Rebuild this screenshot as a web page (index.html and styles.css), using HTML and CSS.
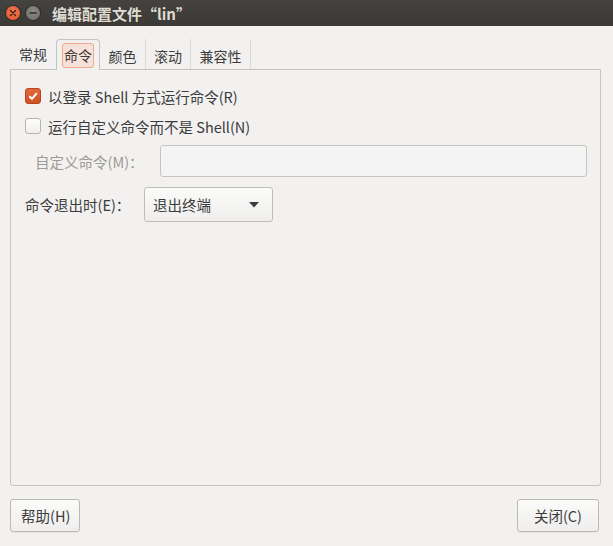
FILE: index.html
```html
<!DOCTYPE html>
<html lang="zh-CN">
<head>
  <meta charset="UTF-8" />
  <title>编辑配置文件“lin”</title>
  <link rel="stylesheet" href="styles.css">
</head>
<body>
  <div class="window">
    <div class="titlebar">
      <span class="wbtn close">
        <svg width="8" height="8" viewBox="0 0 8 8"><path d="M1.5 1.5 L6.5 6.5 M6.5 1.5 L1.5 6.5" stroke="#3b1a10" stroke-width="1.3" stroke-linecap="round"/></svg>
      </span>
      <span class="wbtn minimize">
        <svg width="8" height="8" viewBox="0 0 8 8"><path d="M1 4 H7" stroke="#2e2d2a" stroke-width="1.3" stroke-linecap="round"/></svg>
      </span>
      <span class="title">编辑配置文件“lin”</span>
    </div>

    <div class="dialog">
      <div class="tabs">
        <div class="tab">常规</div>
        <div class="tab active"><span class="focus">命令</span></div>
        <div class="tab sep">颜色</div>
        <div class="tab sep">滚动</div>
        <div class="tab sep last">兼容性</div>
      </div>

      <div class="panel">
        <label class="check-row">
          <span class="checkbox checked">
            <svg width="12" height="12" viewBox="0 0 12 12"><path d="M2.3 6.2 L5 8.8 L9.8 3.2" fill="none" stroke="#fff" stroke-width="2"/></svg>
          </span>
          <span>以登录 Shell 方式运行命令(R)</span>
        </label>
        <label class="check-row">
          <span class="checkbox"></span>
          <span>运行自定义命令而不是 Shell(N)</span>
        </label>

        <div class="field-row">
          <span class="field-label disabled">自定义命令(M)：</span>
          <div class="entry"></div>
        </div>

        <div class="field-row exit-row">
          <span class="field-label">命令退出时(E)：</span>
          <div class="combo">
            <span>退出终端</span>
            <svg width="10" height="6" viewBox="0 0 10 6"><path d="M0 0 H10 L5 5.5 Z" fill="#3c3c3c"/></svg>
          </div>
        </div>
      </div>

      <div class="actions">
        <button class="btn help">帮助(H)</button>
        <button class="btn">关闭(C)</button>
      </div>
    </div>
  </div>
</body>
</html>
```

FILE: styles.css
```css
body {
  margin: 0;
  font-family: "Noto Sans CJK SC", "Noto Sans", sans-serif;
  font-size: 14.5px;
  color: #3c3c3c;
  background: #f2f1f0;
}

.window {
  width: 613px;
  height: 546px;
  display: flex;
  flex-direction: column;
}

.titlebar {
  height: 26px;
  background: linear-gradient(#44433f, #3a3935);
  display: flex;
  align-items: center;
  padding-left: 6px;
}

.wbtn {
  width: 14px;
  height: 14px;
  border-radius: 50%;
  display: flex;
  align-items: center;
  justify-content: center;
  margin-right: 6px;
}

.wbtn.close {
  background: radial-gradient(circle at 50% 40%, #f27a52, #e0522a);
  box-shadow: 0 0 0 1px #2f2e2b;
}

.wbtn.minimize {
  background: radial-gradient(circle at 50% 40%, #8e8c86, #6c6a65);
  box-shadow: 0 0 0 1px #2f2e2b;
}

.title {
  margin-left: 6px;
  color: #dfdbd2;
  font-weight: bold;
  font-size: 15px;
}

.dialog {
  flex: 1;
  display: flex;
  flex-direction: column;
  padding: 13px 12px 14px 10px;
}

.tabs {
  display: flex;
  height: 30px;
  font-size: 14px;
}

.tab {
  padding: 0 8px;
  display: flex;
  align-items: center;
  justify-content: center;
  height: 30px;
  box-sizing: border-box;
  position: relative;
}

.tab:first-child { width: 46px; }

.tab.active {
  width: 44px;
  border: 1px solid #c7c4bf;
  border-bottom: none;
  border-radius: 4px 4px 0 0;
  background: #f2f1f0;
  padding: 0 5px;
  margin-bottom: -1px;
  height: 31px;
  z-index: 1;
}

.focus {
  display: block;
  border: 1px solid #f0a98c;
  background: #f8e1d8;
  border-radius: 3px;
  padding: 0 1px;
  line-height: 23px;
}

.tab.sep { width: 45px; }

.tab.sep:nth-child(4) { border-left: 1px solid #dedbd7; }

.tab.last {
  width: 61px;
  border-left: 1px solid #dedbd7;
  border-right: 1px solid #dedbd7;
}

.tab.sep, .tab.last { padding-top: 4px; }

.panel {
  flex: 1;
  border: 1px solid #c7c4bf;
  border-radius: 0 0 3px 3px;
  padding: 11px 13px 0 14px;
  display: flex;
  flex-direction: column;
}

.check-row {
  display: flex;
  align-items: center;
  height: 30px;
}

.checkbox {
  width: 14px;
  height: 14px;
  border: 1px solid #b6b3ae;
  border-radius: 3px;
  background: linear-gradient(#fdfdfc, #f0efee);
  margin-right: 7px;
  display: flex;
  align-items: center;
  justify-content: center;
}

.checkbox.checked {
  background: linear-gradient(#e2693b, #cf5126);
  border-color: #b5461f;
}

.field-row {
  display: flex;
  align-items: center;
  margin-top: 4px;
}

.field-label {
  padding-left: 10px;
  width: 125px;
  white-space: nowrap;
}

.field-label.disabled {
  color: #9c9a96;
}

.entry {
  flex: 1;
  height: 32px;
  box-sizing: border-box;
  border: 1px solid #c7c4bf;
  border-radius: 3px;
  background: #f4f4f4;
}

.exit-row {
  margin-top: 10px;
}

.exit-row .field-label {
  padding-left: 0;
  width: 119px;
}

.combo {
  width: 129px;
  height: 35px;
  box-sizing: border-box;
  border: 1px solid #c0bdb8;
  border-radius: 3px;
  background: linear-gradient(#fbfbfa, #efeeed);
  display: flex;
  align-items: center;
  justify-content: space-between;
  padding: 0 13px 0 8px;
}

.actions {
  display: flex;
  justify-content: space-between;
  margin-top: 13px;
  padding-right: 2px;
}

.btn {
  font-family: inherit;
  font-size: 14.5px;
  color: #3c3c3c;
  height: 33px;
  padding: 0 10px;
  border: 1px solid #bcb9b4;
  border-radius: 3px;
  background: linear-gradient(#fbfbfa, #efeeed);
  box-shadow: 0 1px 0 rgba(0,0,0,0.04);
  white-space: nowrap;
}

.btn.help { width: 70px; }
.btn:last-child { width: 82px; }
```
